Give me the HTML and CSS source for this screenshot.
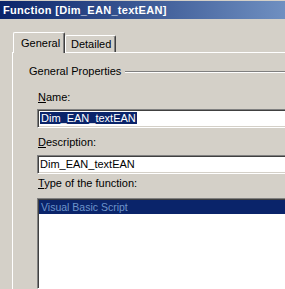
FILE: index.html
```html
<!DOCTYPE html>
<html>
<head>
<meta charset="utf-8">
<link rel="stylesheet" href="styles.css">
</head>
<body>
<div class="window">
  <div class="titlebar">Function [Dim_EAN_textEAN]</div>
  <div class="content">
    <div class="tabs">
      <div class="tab tab-active">General</div>
      <div class="tab tab-inactive">Detailed</div>
    </div>
    <div class="panel">
      <div class="group-header">
        <span class="group-title">General Properties</span>
        <span class="group-line"></span>
      </div>
      <div class="label label-name"><u>N</u>ame:</div>
      <div class="field field-name"><span class="selected">Dim_EAN_textEAN</span></div>
      <div class="label label-desc"><u>D</u>escription:</div>
      <div class="field field-desc">Dim_EAN_textEAN</div>
      <div class="label label-type"><u>T</u>ype of the function:</div>
      <div class="listbox">
        <div class="list-item">Visual Basic Script</div>
      </div>
    </div>
  </div>
</div>
</body>
</html>
```
FILE: styles.css
```css
html, body {
  margin: 0;
  padding: 0;
  width: 285px;
  height: 289px;
  overflow: hidden;
  background: #d4d0c8;
}
.window {
  width: 285px;
  height: 289px;
  overflow: hidden;
  font-family: "Liberation Sans", Arial, sans-serif;
  font-size: 11px;
  color: #000;
  display: flex;
  flex-direction: column;
}
.titlebar {
  margin-top: 1px;
  height: 18px;
  line-height: 18px;
  padding-left: 3px;
  color: #fff;
  font-weight: bold;
  font-size: 11px;
  letter-spacing: 0.3px;
  white-space: nowrap;
  background: linear-gradient(to right, #0a246a, #a6caf0);
  background-size: 440px 100%;
  background-repeat: no-repeat;
}
.content {
  padding: 13px 0 0 12px;
  flex: 1;
  display: flex;
  flex-direction: column;
}
.tabs {
  display: flex;
  align-items: flex-end;
  height: 20px;
  padding-left: 1px;
}
.tab {
  box-sizing: border-box;
  border-top: 1px solid #fff;
  border-left: 1px solid #fff;
  border-right: 1px solid #404040;
  box-shadow: inset -1px 0 #808080;
  border-radius: 2px 2px 0 0;
  white-space: nowrap;
}
.tab-active {
  width: 52px;
  height: 21px;
  margin-bottom: -1px;
  padding: 4px 0 0 7px;
  position: relative;
  z-index: 1;
  background: #d4d0c8;
}
.tab-inactive {
  width: 51px;
  height: 17px;
  padding: 2px 0 0 5px;
}
.panel {
  flex: 1;
  border-top: 1px solid #fff;
  border-left: 1px solid #fff;
  display: flex;
  flex-direction: column;
}
.group-header {
  margin-top: 12px;
  display: flex;
  align-items: center;
  height: 13px;
  line-height: 13px;
  padding-left: 16px;
}
.group-title {
  white-space: nowrap;
  margin-right: 4px;
}
.group-line {
  flex: 1;
  height: 0;
  border-top: 1px solid #808080;
  border-bottom: 1px solid #fff;
}
.label {
  line-height: 13px;
  height: 13px;
  padding-left: 25px;
  white-space: nowrap;
}
.label-name { margin-top: 13px; }
.label-desc { margin-top: 8px; }
.label-type { margin-top: 3px; }
.field {
  box-sizing: border-box;
  margin-left: 24px;
  width: 300px;
  height: 19px;
  background: #fff;
  border: 1px solid;
  border-color: #808080 #fff #fff #808080;
  box-shadow: inset 1px 1px #404040, inset -1px -1px #d4d0c8;
  padding: 2px 0 0 2px;
  line-height: 13px;
  white-space: nowrap;
}
.field-name { margin-top: 5px; }
.field-desc { margin-top: 6px; }
.selected {
  background: #0a246a;
  color: #fff;
  padding: 0 1px;
}
.listbox {
  box-sizing: border-box;
  margin-top: 8px;
  margin-left: 24px;
  width: 300px;
  flex: 1;
  background: #fff;
  border: 1px solid;
  border-color: #808080 #fff #fff #808080;
  box-shadow: inset 1px 1px #404040;
  padding: 1px 0 0 1px;
}
.list-item {
  background: #0a246a;
  color: #6e95cc;
  height: 14px;
  line-height: 14px;
  padding-left: 2px;
  font-size: 10.5px;
  white-space: nowrap;
}
```
